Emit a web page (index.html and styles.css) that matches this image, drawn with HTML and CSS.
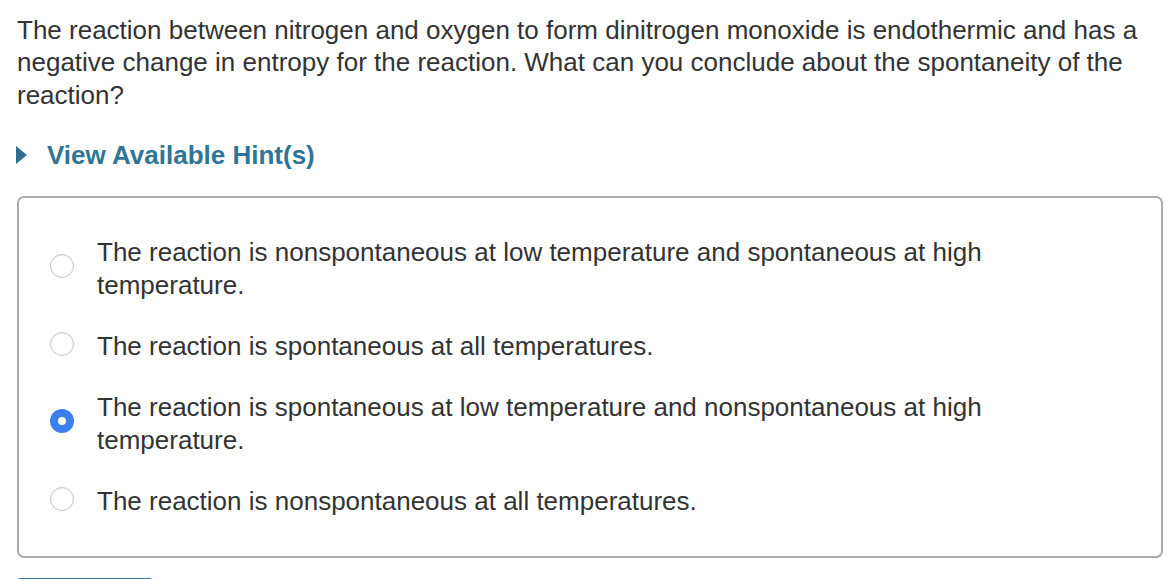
FILE: index.html
```html
<!DOCTYPE html>
<html>
<head>
<meta charset="utf-8">
<link rel="stylesheet" href="styles.css">
</head>
<body>
<div class="page">
  <p class="question">The reaction between nitrogen and oxygen to form dinitrogen monoxide is endothermic and has a negative change in entropy for the reaction. What can you conclude about the spontaneity of the reaction?</p>
  <div class="hint">
    <svg class="tri" width="13" height="20" viewBox="0 0 13 20"><path d="M1 1 L12 10 L1 19 Z" fill="#2f6f8f"/></svg>
    <span class="hint-text">View Available Hint(s)</span>
  </div>
  <div class="box">
    <label class="opt"><span class="radio"></span><span class="txt">The reaction is nonspontaneous at low temperature and spontaneous at high temperature.</span></label>
    <label class="opt"><span class="radio"></span><span class="txt">The reaction is spontaneous at all temperatures.</span></label>
    <label class="opt"><span class="radio checked"></span><span class="txt">The reaction is spontaneous at low temperature and nonspontaneous at high temperature.</span></label>
    <label class="opt"><span class="radio"></span><span class="txt">The reaction is nonspontaneous at all temperatures.</span></label>
  </div>
  <div class="submit"></div>
</div>
</body>
</html>
```

FILE: styles.css
```css
html, body {
  margin: 0;
  padding: 0;
  background: #fff;
}
body {
  font-family: "Liberation Sans", Arial, sans-serif;
  color: #333;
  font-size: 26px;
  line-height: 32.4px;
}
.page {
  padding: 14px 13px 0 17px;
}
.question {
  margin: 0;
}
.hint {
  display: flex;
  align-items: center;
  margin-top: 28px;
  margin-left: -2px;
  height: 32px;
}
.tri {
  display: block;
  margin-right: 19px;
}
.hint-text {
  font-weight: bold;
  color: #2f7597;
}
.box {
  margin-top: 25px;
  border: 2px solid #ababab;
  border-radius: 7px;
  padding: 38px 20px 38px 31px;
  display: flex;
  flex-direction: column;
  gap: 29px;
}
.opt {
  display: flex;
  align-items: center;
}
.radio {
  flex: none;
  width: 22px;
  height: 22px;
  border-radius: 50%;
  border: 1px solid #c4c4c4;
  background: #fff;
  box-shadow: inset 0 1px 1px rgba(0,0,0,0.06);
  margin-right: 23px;
  margin-top: -6px;
  box-sizing: content-box;
}
.opt:nth-child(2) .radio,
.opt:nth-child(4) .radio {
  margin-top: -4px;
}
.radio.checked {
  border: 8px solid #3a7ff0;
  width: 8px;
  height: 8px;
  background: #fff;
  box-shadow: none;
}
.txt {
  display: block;
  max-width: 950px;
}
.submit {
  margin-top: 20px;
  width: 136px;
  height: 10px;
  background: #2e78a0;
  border-radius: 4px 4px 0 0;
}
```
